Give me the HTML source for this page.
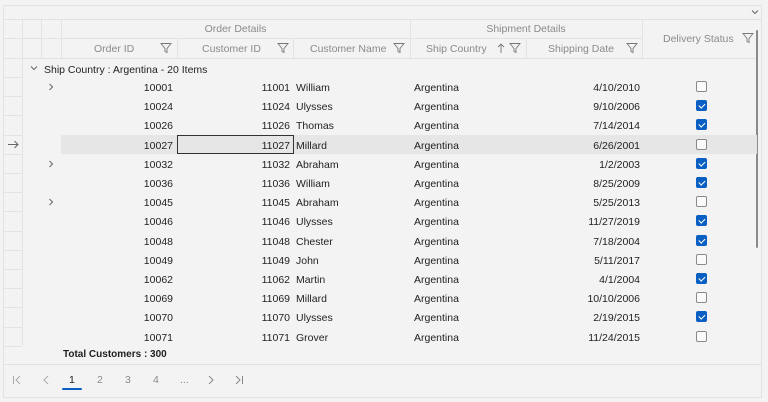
<!DOCTYPE html>
<html><head><style>
*{margin:0;padding:0;box-sizing:border-box}
body{width:768px;height:402px;background:#f3f3f3;font-family:"Segoe UI","Liberation Sans",sans-serif;font-size:10.5px;color:#1f1f1f;position:relative;overflow:hidden}
.a{position:absolute}
.h{color:#8a8a8a;font-size:10.5px}
.vl{position:absolute;width:1px;background:#e3e3e3}
.hl{position:absolute;height:1px;background:#e3e3e3}
.r{position:absolute;left:0;width:757px;height:19.2px;line-height:19.2px}
.r span{position:absolute;top:2px}
.cb{position:absolute;left:696px;top:4px;width:11px;height:11px;border:1px solid #8a8a8a;border-radius:2px;background:#fafafa}
.cb.on{background:#0a5fc2;border-color:#0a5fc2}
.cb.on:after{content:"";position:absolute;left:3px;top:1px;width:2.5px;height:5px;border:solid #fff;border-width:0 1px 1px 0;transform:rotate(45deg)}
.pg{position:absolute;top:374px;color:#8a8a8a;font-size:10.5px}
</style></head><body>
<div class="a" style="left:3px;top:5px;width:759px;height:393px;border:1px solid #e3e3e3"></div>
<div class="hl" style="left:3px;top:19px;width:759px"></div>
<svg class="a" style="left:751px;top:9px" width="8" height="6"><path d="M1 1.5 L4 4.5 L7 1.5" fill="none" stroke="#666" stroke-width="1"/></svg>
<div class="hl" style="left:3px;top:38px;width:639px"></div>
<div class="hl" style="left:3px;top:58px;width:754px"></div>
<div class="vl" style="left:22px;top:19px;height:39px"></div>
<div class="vl" style="left:41px;top:19px;height:39px"></div>
<div class="vl" style="left:61px;top:19px;height:39px"></div>
<div class="vl" style="left:177px;top:38px;height:20px"></div>
<div class="vl" style="left:293px;top:38px;height:20px"></div>
<div class="vl" style="left:410px;top:19px;height:39px"></div>
<div class="vl" style="left:526px;top:38px;height:20px"></div>
<div class="vl" style="left:642px;top:19px;height:39px"></div>
<div class="vl" style="left:22px;top:58px;height:287px"></div>
<div class="a h" style="left:61px;width:349px;top:23px;text-align:center">Order Details</div>
<div class="a h" style="left:410px;width:232px;top:23px;text-align:center">Shipment Details</div>
<div class="a h" style="left:94px;top:43px">Order ID</div>
<div class="a h" style="left:202px;top:43px">Customer ID</div>
<div class="a h" style="left:310px;top:43px">Customer Name</div>
<div class="a h" style="left:426px;top:43px">Ship Country</div>
<div class="a h" style="left:548px;top:43px">Shipping Date</div>
<div class="a h" style="left:663px;top:33px">Delivery Status</div>
<svg width="0" height="0" style="position:absolute"><defs><symbol id="fi" viewBox="0 0 12 12"><path d="M1 1.5 H11 L7 6.5 V10.5 L5 9.5 V6.5 Z" fill="none" stroke="#777" stroke-width="0.9"/></symbol></defs></svg>
<svg class="a" style="left:160px;top:42px" width="12" height="12"><use href="#fi"/></svg>
<svg class="a" style="left:277px;top:42px" width="12" height="12"><use href="#fi"/></svg>
<svg class="a" style="left:393px;top:42px" width="12" height="12"><use href="#fi"/></svg>
<svg class="a" style="left:509px;top:42px" width="12" height="12"><use href="#fi"/></svg>
<svg class="a" style="left:626px;top:42px" width="12" height="12"><use href="#fi"/></svg>
<svg class="a" style="left:742px;top:32px" width="12" height="12"><use href="#fi"/></svg>
<svg class="a" style="left:497px;top:42px" width="8" height="12"><path d="M4 11 V2 M1 5 L4 2 L7 5" fill="none" stroke="#777" stroke-width="0.9"/></svg>
<svg class="a" style="left:30px;top:65px" width="8" height="6"><path d="M1 1.5 L4 4.5 L7 1.5" fill="none" stroke="#666"/></svg>
<div class="a" style="left:44px;top:64px">Ship Country : Argentina - 20 Items</div>
<div class="hl" style="left:3px;top:77px;width:19px"></div>
<div class="a" style="left:756px;top:30px;width:2px;height:218px;background:#8a8a8a;border-radius:1px"></div>
<div id="rows"></div>
<div class="a" style="left:63px;top:349px;font-weight:bold;font-size:10px">Total Customers : 300</div>
<div class="hl" style="left:3px;top:364px;width:759px"></div>
<svg class="a" style="left:12px;top:375px" width="10" height="10"><path d="M1.5 1 V9 M8 1 L4 5 L8 9" fill="none" stroke="#aaa"/></svg>
<svg class="a" style="left:42px;top:375px" width="8" height="10"><path d="M6 1 L2 5 L6 9" fill="none" stroke="#aaa"/></svg>
<div class="pg" style="left:69px;color:#1f1f1f">1</div>
<div class="a" style="left:62px;top:388px;width:20px;height:2px;background:#0a5fc2;border-radius:1px"></div>
<div class="pg" style="left:97px">2</div>
<div class="pg" style="left:125px">3</div>
<div class="pg" style="left:153px">4</div>
<div class="pg" style="left:180px">...</div>
<svg class="a" style="left:207px;top:375px" width="8" height="10"><path d="M2 1 L6 5 L2 9" fill="none" stroke="#888"/></svg>
<svg class="a" style="left:234px;top:375px" width="10" height="10"><path d="M2 1 L6 5 L2 9 M8.5 1 V9" fill="none" stroke="#888"/></svg>
<script>
var d=[["10001","11001","William","4/10/2010",0,1],["10024","11024","Ulysses","9/10/2006",1],["10026","11026","Thomas","7/14/2014",1],["10027","11027","Millard","6/26/2001",0],["10032","11032","Abraham","1/2/2003",1,1],["10036","11036","William","8/25/2009",1],["10045","11045","Abraham","5/25/2013",0,1],["10046","11046","Ulysses","11/27/2019",1],["10048","11048","Chester","7/18/2004",1],["10049","11049","John","5/11/2017",0],["10062","11062","Martin","4/1/2004",1],["10069","11069","Millard","10/10/2006",0],["10070","11070","Ulysses","2/19/2015",1],["10071","11071","Grover","11/24/2015",0]];
var h="";
d.forEach(function(r,i){var t=77+i*19.2;
if(i==3)h+='<div class="a" style="left:61px;top:'+t+'px;width:696px;height:19px;background:#e6e6e6"></div><div class="a" style="left:177px;top:'+t+'px;width:117px;height:19px;border:1.5px solid #333"></div><svg class="a" style="left:7px;top:'+(t+5)+'px" width="12" height="9"><path d="M1 4.5 H11 M7.5 1 L11 4.5 L7.5 8" fill="none" stroke="#666"/></svg>';
h+='<div class="r" style="top:'+t+'px">'+(r[5]?'<svg style="position:absolute;left:48px;top:6px" width="6" height="8"><path d="M1.5 1 L4.5 4 L1.5 7" fill="none" stroke="#666"/></svg>':'')+'<span style="right:584px">'+r[0]+'</span><span style="right:467px">'+r[1]+'</span><span style="left:296px">'+r[2]+'</span><span style="left:414px">Argentina</span><span style="right:117px">'+r[3]+'</span><div class="cb'+(r[4]?' on':'')+'"></div></div>';
h+='<div class="hl" style="left:3px;top:'+(t+19.2)+'px;width:19px"></div>';});
document.getElementById("rows").innerHTML=h;
</script>
</body></html>
